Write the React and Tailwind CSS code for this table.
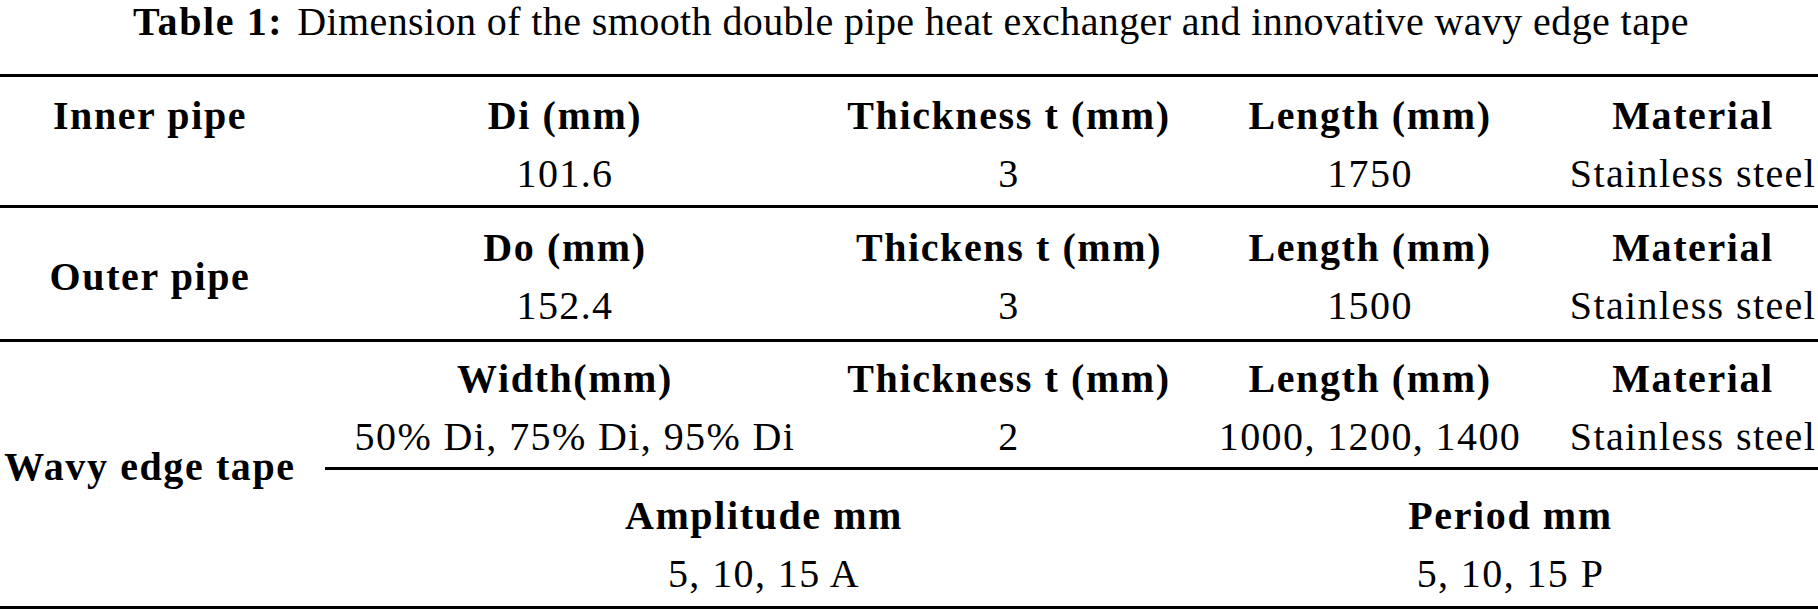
const cols = "grid grid-cols-[300px_530px_358px_364px_1fr] text-center leading-[58px]";
const sub = "grid grid-cols-[530px_358px_364px_1fr] text-center leading-[58px]";

function Head({ children, className = "" }) {
  return <div className={`font-bold tracking-[0.04em] whitespace-nowrap ${className}`}>{children}</div>;
}

function Val({ children, className = "" }) {
  return <div className={`tracking-[0.035em] whitespace-nowrap ${className}`}>{children}</div>;
}

function Rule({ className = "" }) {
  return <div className={`h-[3px] bg-black ${className}`} />;
}

export default function App() {
  return (
    <div className="w-[1818px] h-[610px] bg-white text-black text-[40px] [font-family:'Liberation_Serif',serif] overflow-hidden">
      <div className="h-[44px] leading-[44px] pl-[133px] whitespace-nowrap">
        <span className="font-bold tracking-[0.04em]">Table 1:</span>
        <span className="ml-[14px] tracking-[0.01em]">
          Dimension of the smooth double pipe heat exchanger and innovative wavy edge tape
        </span>
      </div>

      <Rule className="mt-[30px]" />
      <div className={`${cols} pt-[10px] pb-[2px]`}>
        <Head>Inner pipe</Head>
        <Head>Di (mm)</Head>
        <Head>Thickness t (mm)</Head>
        <Head>Length (mm)</Head>
        <Head className="pl-[16px]">Material</Head>
        <div />
        <Val>101.6</Val>
        <Val>3</Val>
        <Val>1750</Val>
        <Val className="pl-[16px]">Stainless steel</Val>
      </div>

      <Rule />
      <div className={`${cols} pt-[11px] pb-[4px]`}>
        <div className="row-span-2 self-center">
          <Head>Outer pipe</Head>
        </div>
        <Head>Do (mm)</Head>
        <Head>Thickens t (mm)</Head>
        <Head>Length (mm)</Head>
        <Head className="pl-[16px]">Material</Head>
        <Val>152.4</Val>
        <Val>3</Val>
        <Val>1500</Val>
        <Val className="pl-[16px]">Stainless steel</Val>
      </div>

      <Rule />
      <div className="flex">
        <div className="w-[300px] flex items-center justify-center pb-[14px]">
          <Head>Wavy edge tape</Head>
        </div>
        <div className="flex-1">
          <div className={`${sub} pt-[8px] pb-[1px]`}>
            <Head>Width(mm)</Head>
            <Head>Thickness t (mm)</Head>
            <Head>Length (mm)</Head>
            <Head className="pl-[16px]">Material</Head>
            <Val className="pl-[20px]">50% Di, 75% Di, 95% Di</Val>
            <Val>2</Val>
            <Val>1000, 1200, 1400</Val>
            <Val className="pl-[16px]">Stainless steel</Val>
          </div>
          <Rule className="ml-[25px]" />
          <div className="ml-[25px] grid grid-cols-[878px_1fr] text-center leading-[58px] pt-[17px] pb-[3px]">
            <Head>Amplitude mm</Head>
            <Head>Period mm</Head>
            <Val>5, 10, 15 A</Val>
            <Val>5, 10, 15 P</Val>
          </div>
        </div>
      </div>
      <Rule />
    </div>
  );
}
